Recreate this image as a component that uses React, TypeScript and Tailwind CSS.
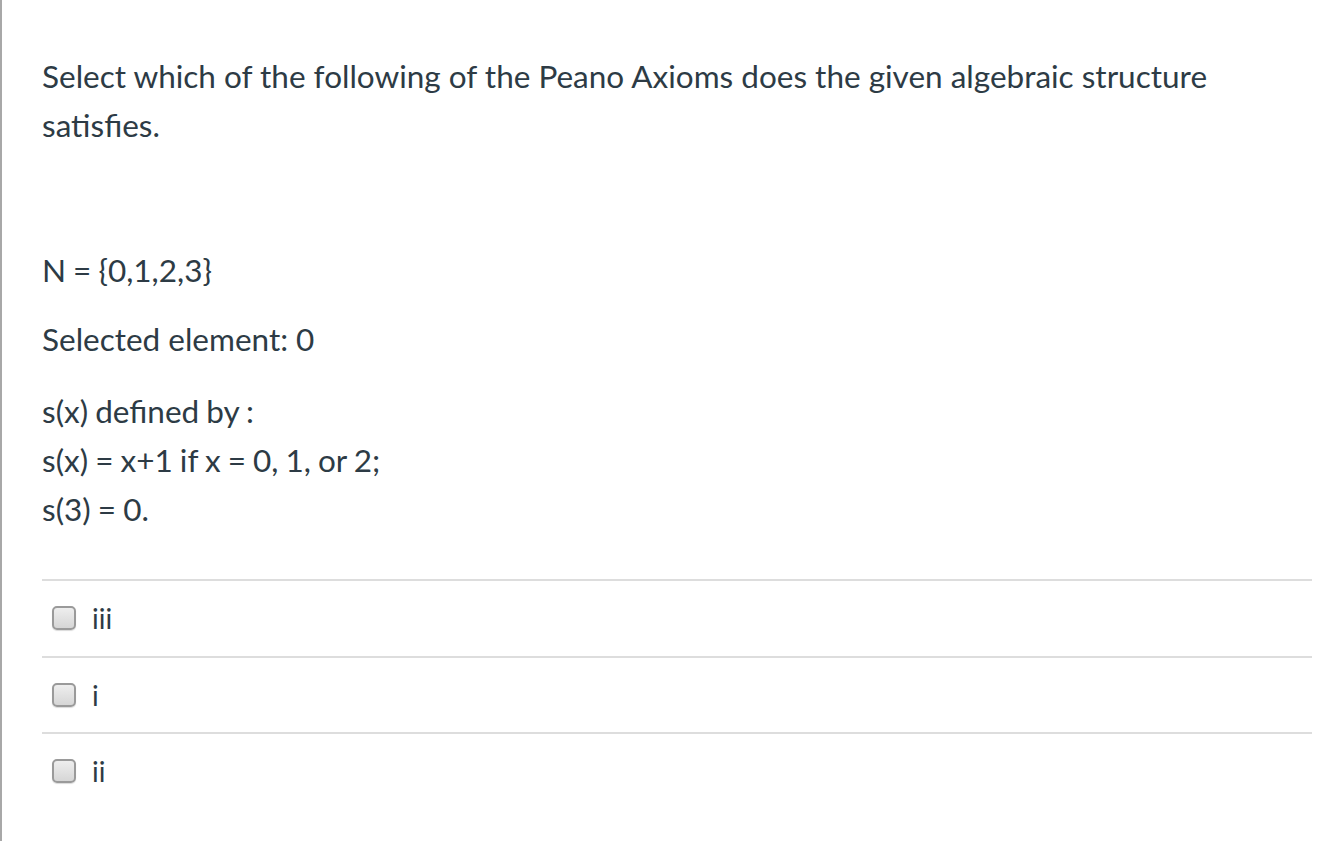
export default function App() {
  const options = ["iii", "i", "ii"];
  return (
    <div className="min-h-[841px] w-full bg-white border-l-2 border-[#a8a8a8] font-['Lato',sans-serif] text-[#2d3b45]">
      <div className="pl-10 pr-[30px] pt-[52px]">
        <p className="text-[31.5px] leading-[49px] max-w-[1185px]">
          Select which of the following of the Peano Axioms does the given algebraic structure satisfies.
        </p>
        <p className="text-[31.5px] leading-[49px] mt-[96px] [word-spacing:-1px]">N = {"{0,1,2,3}"}</p>
        <p className="text-[31.5px] leading-[49px] mt-[20px]">Selected element: 0</p>
        <div className="text-[31.5px] leading-[49px] mt-[23px] [word-spacing:-1px]">
          <p>s(x) defined by :</p>
          <p>s(x) = x+1 if x = 0, 1, or 2;</p>
          <p>s(3) = 0.</p>
        </div>
        <div className="mt-[45px]">
          {options.map((o) => (
            <div key={o} className="border-t-2 border-[#dddddd] h-[76.5px] flex items-center pl-[10px]">
              <span className="w-[24px] h-[24px] rounded-[5px] border-2 border-[#9a9a9a] bg-gradient-to-b from-[#eeeeee] to-[#d6d6d6] shadow-[0_1px_1px_rgba(0,0,0,0.15)]" />
              <span className="ml-[16px] text-[28px] leading-none text-[#2d3b45]">{o}</span>
            </div>
          ))}
        </div>
      </div>
    </div>
  );
}
